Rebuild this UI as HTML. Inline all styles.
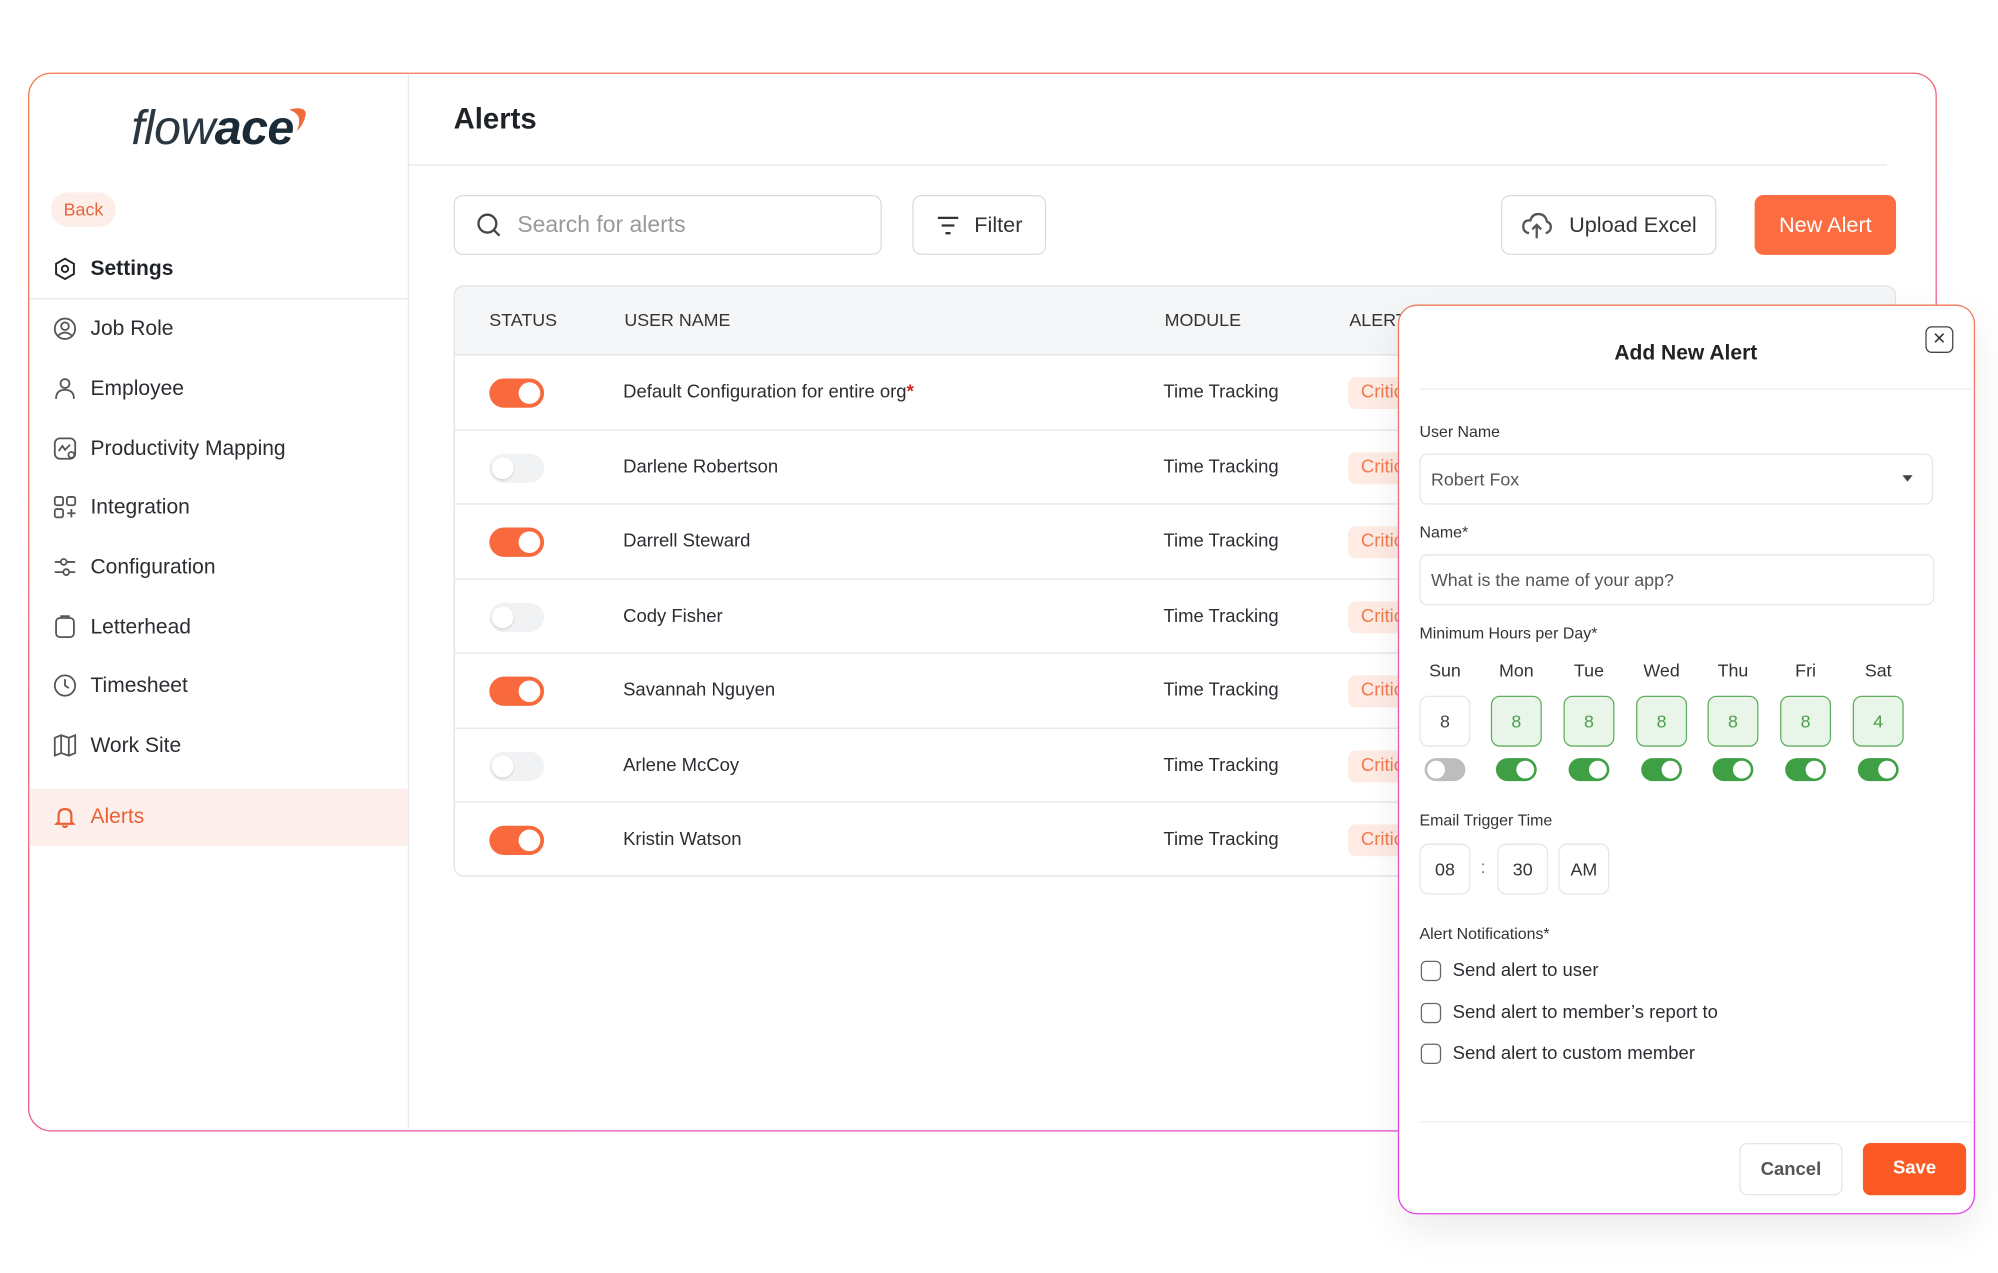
<!DOCTYPE html>
<html><head><meta charset="utf-8">
<style>
*{box-sizing:border-box;margin:0;padding:0}
html,body{width:1998px;height:1272px;overflow:hidden;background:#fff}
#s{position:absolute;left:0;top:0;width:1568px;height:999px;transform:scale(1.27423);transform-origin:0 0;font-family:"Liberation Sans",Arial,sans-serif;color:#1f2328}
.a{position:absolute}
.gb{position:absolute;border-radius:18px;background:linear-gradient(160deg,#f07a4a 0%,#ee5f8a 55%,#e33ee6 100%)}
.gi{position:absolute;inset:1.3px;background:#fff;border-radius:17px}
.nav{position:absolute;left:41px;font-size:16.5px;color:#2a2d31;display:flex;align-items:center;gap:10px}
.nav svg{width:20px;height:20px;fill:none;stroke:#555;stroke-width:1.4}
.btn{position:absolute;border:1px solid #d9dcdf;border-radius:7px;background:#fff;display:flex;align-items:center;justify-content:center;font-size:17px;color:#333}
.row{position:absolute;left:357px;width:1130px;height:58.5px;border-top:1px solid #e3e5e8;font-size:14.5px;color:#2a2d31}
.row span{position:absolute;top:21px}
.tg{position:absolute;left:27px;top:18px;width:43px;height:23px;border-radius:12px;background:#f86a3d}
.tg::after{content:"";position:absolute;right:3px;top:3px;width:17px;height:17px;border-radius:50%;background:#fff}
.tg.off{background:#f1f2f4}
.tg.off::after{left:2px;right:auto;box-shadow:0 1px 2px rgba(0,0,0,.15)}
.chip{position:absolute;left:701px;top:17px;width:60px;height:25px;background:#fdebe4;border-radius:6px;color:#f4794d;font-size:14.5px;padding:4px 0 0 10px}
.lbl{position:absolute;left:1114px;font-size:12.5px;color:#333}
.in{position:absolute;left:1114px;width:403px;height:40px;border:1px solid #e4e6e9;border-radius:6px;font-size:14px;color:#555;padding:11px 0 0 8px}
.day{position:absolute;top:518px;width:40px;text-align:center;font-size:14px;color:#333}
.box{position:absolute;top:546px;width:40px;height:40px;border:1px solid #5fae5f;background:#e9f5e9;border-radius:7px;text-align:center;line-height:39px;font-size:14px;color:#4a9f4a}
.gt{position:absolute;top:595px;width:32px;height:18px;border-radius:9px;background:#3f9f45}
.gt::after{content:"";position:absolute;right:2px;top:2px;width:14px;height:14px;border-radius:50%;background:#fff}
.gt.off{background:#bdbdbd}
.gt.off::after{left:2px;right:auto}
.tb{position:absolute;top:662px;width:40px;height:40px;border:1px solid #e4e6e9;border-radius:7px;text-align:center;line-height:39px;font-size:14px;color:#333}
.cb{position:absolute;left:1115px;width:16px;height:16px;border:1.4px solid #666;border-radius:4px}
.ct{position:absolute;left:1140px;font-size:14.5px;color:#2a2d31}
</style></head><body><div id="s">

<div class="gb" style="left:22px;top:57px;width:1498px;height:831px"><div class="gi"></div></div>
<div class="a" style="left:320px;top:58px;width:1px;height:828px;background:#e8e9eb"></div>

<div class="a" style="left:103px;top:80px;font-size:38px;color:#1a2a36;letter-spacing:-0.5px"><span style="font-style:italic;font-weight:400;color:#2a3640">flow</span><span style="font-weight:700;font-style:italic">ace</span></div>
<svg class="a" style="left:225px;top:83px" width="20" height="22" viewBox="0 0 20 22"><path d="M2 3 Q14 0 15 6 Q14 14 8 20 Q11 12 9 8 Q7 5 2 3Z" fill="#f06a3a"/></svg>

<div class="a" style="left:40px;top:151px;width:51px;height:27px;border-radius:14px;background:#fdeee9;color:#e8643a;font-size:14px;text-align:center;line-height:27px">Back</div>

<div class="nav" style="top:201px;font-weight:700;color:#1f2328"><svg viewBox="0 0 20 20"><path d="M10 2 L17 6 L17 14 L10 18 L3 14 L3 6Z" stroke="#222" stroke-width="1.5"/><circle cx="10" cy="10" r="2.5" stroke="#222" stroke-width="1.5"/></svg>Settings</div>
<div class="a" style="left:23px;top:234px;width:297px;height:1px;background:#e8e9eb"></div>
<div class="nav" style="top:248px"><svg viewBox="0 0 20 20"><circle cx="10" cy="10" r="8"/><circle cx="10" cy="8" r="3"/><path d="M4.5 15.5 Q10 10.5 15.5 15.5"/></svg>Job Role</div>
<div class="nav" style="top:295px"><svg viewBox="0 0 20 20"><circle cx="10" cy="6" r="3.5"/><path d="M3 18 Q3 11 10 11 Q17 11 17 18"/></svg>Employee</div>
<div class="nav" style="top:342px"><svg viewBox="0 0 20 20"><rect x="2" y="2" width="16" height="16" rx="4"/><path d="M5 12 L8 8 L10 11 L14 7"/><circle cx="15" cy="15" r="2.3" fill="#fff"/></svg>Productivity Mapping</div>
<div class="nav" style="top:388px"><svg viewBox="0 0 20 20"><rect x="2" y="2" width="6.5" height="6.5" rx="1.5"/><rect x="11.5" y="2" width="6.5" height="6.5" rx="1.5"/><rect x="2" y="11.5" width="6.5" height="6.5" rx="1.5"/><path d="M15 11.5 V18 M11.8 14.8 H18.2"/></svg>Integration</div>
<div class="nav" style="top:435px"><svg viewBox="0 0 20 20"><circle cx="9" cy="6" r="2.3"/><circle cx="11" cy="14" r="2.3"/><path d="M2 6 H6.5 M11.5 6 H18 M2 14 H8.5 M13.5 14 H18"/></svg>Configuration</div>
<div class="nav" style="top:482px"><svg viewBox="0 0 20 20"><rect x="3" y="3" width="14" height="15" rx="3"/><path d="M7 3 V1.5 H13 V3"/></svg>Letterhead</div>
<div class="nav" style="top:528px"><svg viewBox="0 0 20 20"><circle cx="10" cy="10" r="8"/><path d="M10 5 V10 L13 12"/></svg>Timesheet</div>
<div class="nav" style="top:575px"><svg viewBox="0 0 20 20"><path d="M2 4 L7 2 L13 4 L18 2 V16 L13 18 L7 16 L2 18Z M7 2 V16 M13 4 V18"/></svg>Work Site</div>
<div class="a" style="left:23px;top:619px;width:297px;height:45px;background:#fdf0ec"></div>
<div class="nav" style="top:631px;color:#ea5f33"><svg viewBox="0 0 20 20" style="stroke:#ea5f33;stroke-width:1.7"><path d="M5 14 V9 Q5 4 10 4 Q15 4 15 9 V14 L16.5 15.5 H3.5Z M8 17 Q10 19 12 17"/></svg>Alerts</div>

<div class="a" style="left:356px;top:80px;font-size:23px;font-weight:700;color:#1f2328">Alerts</div>
<div class="a" style="left:321px;top:129px;width:1160px;height:1px;background:#e3e5e8"></div>

<div class="btn" style="left:356px;top:153px;width:336px;height:47px;justify-content:flex-start;padding-left:16px;color:#999;font-size:18px"><svg width="22" height="22" viewBox="0 0 22 22" style="margin-right:11px"><circle cx="9.5" cy="9.5" r="7" fill="none" stroke="#444" stroke-width="1.8"/><path d="M14.5 14.5 L19 19" stroke="#444" stroke-width="1.8"/></svg>Search for alerts</div>
<div class="btn" style="left:716px;top:153px;width:105px;height:47px"><svg width="18" height="16" viewBox="0 0 18 16" style="margin-right:12px"><path d="M1 2 H17 M4 8 H14 M7 14 H11" stroke="#333" stroke-width="1.8"/></svg>Filter</div>
<div class="btn" style="left:1178px;top:153px;width:169px;height:47px"><svg width="26" height="24" viewBox="0 0 26 24" style="margin-right:12px"><path d="M7 18 Q2 17 2.5 12 Q3 7.5 8 8 Q9.5 3 14 3 Q20 3 21 9 Q24.5 10 24 14 Q23.5 17 20 18" fill="none" stroke="#555" stroke-width="1.8"/><path d="M13 22 V12 M9.5 15 L13 11.5 L16.5 15" fill="none" stroke="#555" stroke-width="1.8"/></svg>Upload Excel</div>
<div class="btn" style="left:1377px;top:153px;width:111px;height:47px;background:#fb6d40;border-color:#fb6d40;color:#fff">New Alert</div>

<div class="a" style="left:356px;top:224px;width:1132px;height:464px;border:1px solid #dfe2e5;border-radius:8px;overflow:hidden">
<div class="a" style="left:0;top:0;width:1132px;height:54px;background:#f4f6f8"></div></div>
<div class="a" style="left:384px;top:243px;font-size:14px;color:#333">STATUS</div>
<div class="a" style="left:490px;top:243px;font-size:14px;color:#333">USER NAME</div>
<div class="a" style="left:914px;top:243px;font-size:14px;color:#333">MODULE</div>
<div class="a" style="left:1059px;top:243px;font-size:14px;color:#333">ALERT</div>

<div class="row" style="top:278px"><div class="tg"></div><span style="left:132px">Default Configuration for entire org<b style="color:#d21f1f">*</b></span><span style="left:556px">Time Tracking</span><div class="chip">Critical</div></div>
<div class="row" style="top:337px"><div class="tg off"></div><span style="left:132px">Darlene Robertson</span><span style="left:556px">Time Tracking</span><div class="chip">Critical</div></div>
<div class="row" style="top:395px"><div class="tg"></div><span style="left:132px">Darrell Steward</span><span style="left:556px">Time Tracking</span><div class="chip">Critical</div></div>
<div class="row" style="top:454px"><div class="tg off"></div><span style="left:132px">Cody Fisher</span><span style="left:556px">Time Tracking</span><div class="chip">Critical</div></div>
<div class="row" style="top:512px"><div class="tg"></div><span style="left:132px">Savannah Nguyen</span><span style="left:556px">Time Tracking</span><div class="chip">Critical</div></div>
<div class="row" style="top:571px"><div class="tg off"></div><span style="left:132px">Arlene McCoy</span><span style="left:556px">Time Tracking</span><div class="chip">Critical</div></div>
<div class="row" style="top:629px"><div class="tg"></div><span style="left:132px">Kristin Watson</span><span style="left:556px">Time Tracking</span><div class="chip">Critical</div></div>

<div class="gb" style="left:1097px;top:239px;width:453px;height:714px;border-radius:15px;background:linear-gradient(180deg,#f07a5a 0%,#ee5aa0 40%,#e33ee6 100%);box-shadow:0 12px 30px rgba(0,0,0,.08)"><div class="gi" style="border-radius:14px"></div></div>
<div class="a" style="left:1098px;top:268px;width:450px;text-align:center;font-size:16.5px;font-weight:700;color:#222">Add New Alert</div>
<div class="a" style="left:1511px;top:256px;width:22px;height:21px;border:1.5px solid #444;border-radius:5px;text-align:center;line-height:17px;font-size:13px;color:#333">✕</div>
<div class="a" style="left:1114px;top:305px;width:434px;height:1px;background:#eceef0"></div>

<div class="lbl" style="top:332px">User Name</div>
<div class="in" style="top:356px">Robert Fox<span style="position:absolute;right:15px;top:16px;border-left:4.5px solid transparent;border-right:4.5px solid transparent;border-top:5px solid #444"></span></div>
<div class="lbl" style="top:411px">Name*</div>
<div class="in" style="top:435px;width:404px">What is the name of your app?</div>
<div class="lbl" style="top:490px">Minimum Hours per Day*</div>

<div class="day" style="left:1114px">Sun</div><div class="day" style="left:1170px">Mon</div><div class="day" style="left:1227px">Tue</div><div class="day" style="left:1284px">Wed</div><div class="day" style="left:1340px">Thu</div><div class="day" style="left:1397px">Fri</div><div class="day" style="left:1454px">Sat</div>
<div class="box" style="left:1114px;background:#fff;border-color:#e4e6e9;color:#444">8</div>
<div class="box" style="left:1170px">8</div><div class="box" style="left:1227px">8</div><div class="box" style="left:1284px">8</div><div class="box" style="left:1340px">8</div><div class="box" style="left:1397px">8</div><div class="box" style="left:1454px">4</div>
<div class="gt off" style="left:1118px"></div>
<div class="gt" style="left:1174px"></div><div class="gt" style="left:1231px"></div><div class="gt" style="left:1288px"></div><div class="gt" style="left:1344px"></div><div class="gt" style="left:1401px"></div><div class="gt" style="left:1458px"></div>

<div class="lbl" style="top:637px">Email Trigger Time</div>
<div class="tb" style="left:1114px">08</div>
<div class="a" style="left:1162px;top:672px;font-size:14px;color:#777">:</div>
<div class="tb" style="left:1175px">30</div>
<div class="tb" style="left:1223px">AM</div>

<div class="lbl" style="top:726px">Alert Notifications*</div>
<div class="cb" style="top:754px"></div><div class="ct" style="top:754px">Send alert to user</div>
<div class="cb" style="top:787px"></div><div class="ct" style="top:787px">Send alert to member’s report to</div>
<div class="cb" style="top:819px"></div><div class="ct" style="top:819px">Send alert to custom member</div>

<div class="a" style="left:1114px;top:880px;width:434px;height:1px;background:#eceef0"></div>
<div class="a" style="left:1365px;top:897px;width:81px;height:41px;border:1px solid #e3e5e8;border-radius:6px;text-align:center;line-height:40px;font-size:14.5px;color:#555;font-weight:700">Cancel</div>
<div class="a" style="left:1462px;top:897px;width:81px;height:41px;background:#fb5a25;border-radius:6px;text-align:center;line-height:41px;font-size:14.5px;color:#fff;font-weight:700">Save</div>

</div></body></html>
